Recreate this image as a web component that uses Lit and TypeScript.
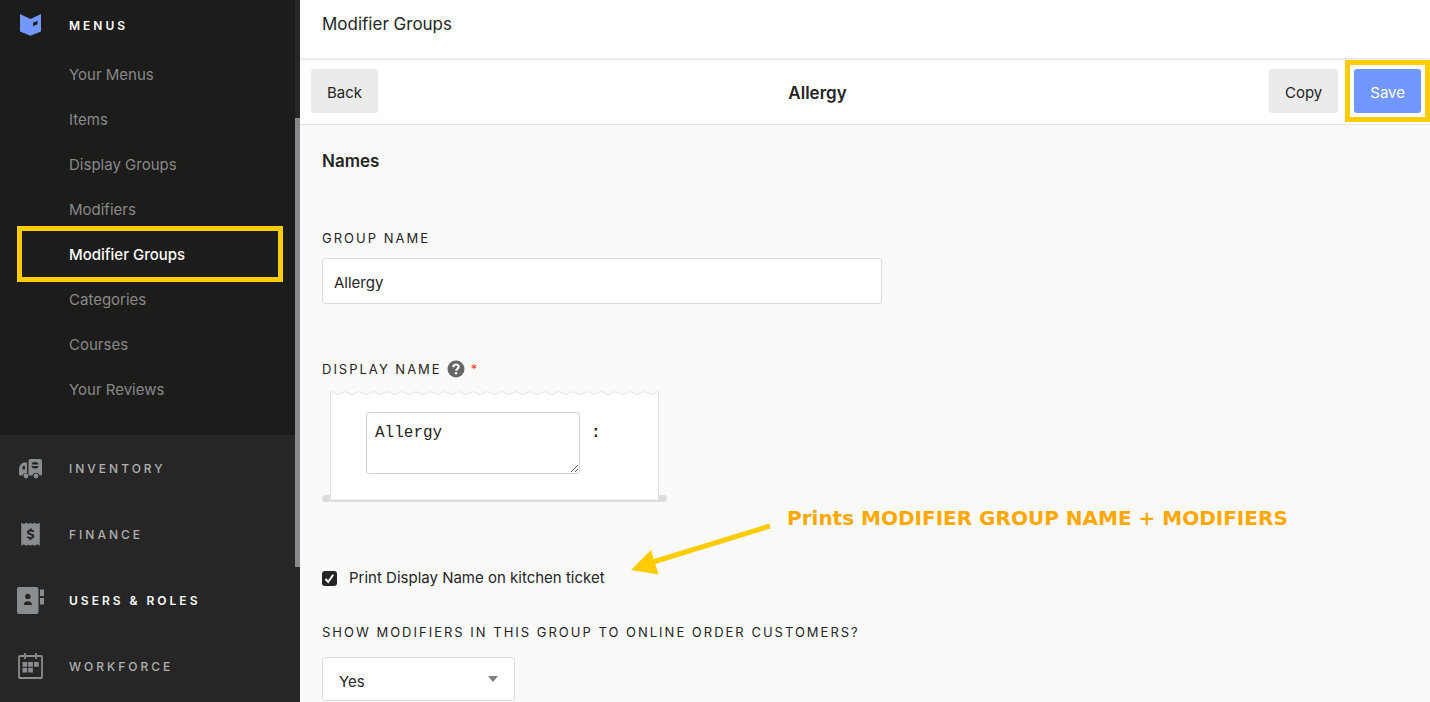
import { LitElement, html, css, svg } from "lit";
import { customElement, property } from "lit/decorators.js";
import { classMap } from "lit/directives/class-map.js";

const glyphs = {
  menus: svg`<path fill="#7297ff" fill-rule="evenodd" d="M20 14l10.500 5L41 14v17.500L30.500 35.700 20 31.500zM33 22.700v3.600l4.500-2v-3.600z"/>`,
  inventory: svg`<g transform="translate(0 2)"><path fill="currentColor" fill-rule="evenodd" d="M30.500 14h9.500a2 2 0 0 1 2 2v13a1.500 1.500 0 0 1-1.500 1.500h-1a3.600 3.600 0 0 0-7 0h-2.500a2 2 0 0 1-1.500-1V16a2 2 0 0 1 2-2zM31.500 19.500h7a3.500 2.500 0 0 0-7 0zM31.500 21a3.500 2.500 0 0 0 7 0z"/><path fill="currentColor" fill-rule="evenodd" d="M24.500 17.500h2.500v11a3.600 3.600 0 0 0-4.500 2h-2a1.500 1.500 0 0 1-1.500-1.500v-5c0-3 2.500-6.500 5.500-6.500zM22.500 21.500v3h2.500v-3.500h-2z"/><circle cx="26" cy="31" r="2.400" fill="currentColor"/><circle cx="36" cy="31" r="2.400" fill="currentColor"/></g>`,
  finance: svg`<g transform="translate(0 1)"><path fill="currentColor" d="M21.200 12.500c2.500 2.400 4 .9 5 0 1.600 1.700 3 1.700 4.300 0 1.300 1.700 2.700 1.700 4.300 0 1 .9 2.500 2.400 5 0v23.500c-2.500-2.600-4-1-5 0-1.600-1.800-3-1.800-4.300 0-1.300-1.800-2.700-1.800-4.300 0-1-1-2.500-2.600-5 0z"/><path fill="none" stroke="#262626" stroke-width="2" d="M33.700 21.700c-.8-1.300-5.700-1.800-5.700.6 0 2.500 5.500 1.200 5.500 3.800 0 2.500-5.200 2.200-6.200.6M30.800 18.500v2.500M30.400 27v3"/></g>`,
  users: svg`<g transform="translate(0 1)"><path fill="currentColor" fill-rule="evenodd" d="M19 11h17.500a2 2 0 0 1 2 2v23a2 2 0 0 1-2 2H19a2 2 0 0 1-2-2V13a2 2 0 0 1 2-2zM23.800 29h8.200c0-2.600-1.600-3.700-4.100-3.700s-4.100 1.100-4.100 3.700zM27.900 17.700a2.700 2.700 0 1 0 0 5.400 2.700 2.700 0 0 0 0-5.400z"/><path fill="currentColor" d="M40 13.500h4v6.500h-4zM40 22h4v6.500h-4z"/></g>`,
  workforce: svg`<g transform="translate(0 1)"><path fill="none" stroke="currentColor" stroke-width="1.800" d="M24 14h-4a1 1 0 0 0-1 1v20a1 1 0 0 0 1 1h21a1 1 0 0 0 1-1V15a1 1 0 0 0-1-1h-4M26 14h9M25 11v6M36 11v6"/><path fill="currentColor" d="M28.200 20h4.700v4.700h-4.700zM34 20h4.700v4.700H34zM22.500 20h4.700v4.700h-4.700zM22.500 25.700h4.700v4.700h-4.700zM28.200 25.700h4.700v4.700h-4.700z"/></g>`,
};

type GlyphName = keyof typeof glyphs;

const menuPages = ["Your Menus", "Items", "Display Groups", "Modifiers", "Modifier Groups", "Categories", "Courses", "Your Reviews"];

const sections: { label: string; glyph: GlyphName; bright?: boolean }[] = [
  { label: "Inventory", glyph: "inventory" },
  { label: "Finance", glyph: "finance" },
  { label: "Users & Roles", glyph: "users", bright: true },
  { label: "Workforce", glyph: "workforce" },
];

// One edge of torn receipt paper, repeated across the top of the ticket.
const tornEdge = "c3 0 4 2.500 7.130 2.500s4.130-2.500 7.130-2.500".repeat(23);

@customElement("side-nav")
class SideNav extends LitElement {
  @property() current = "";

  static styles = css`
    :host { display: flex; width: 300px; flex: none; background: #262626; overflow: hidden; }
    nav { flex: 1; }
    ul { list-style: none; margin: 0; padding: 0; }
    a { text-decoration: none; color: inherit; }
    .open { display: flow-root; background: #1c1c1a; padding-bottom: 23px; }
    .section { display: flex; align-items: center; height: 66px; color: #b0b0b0; font-size: 12px; font-weight: 500; letter-spacing: 3px; text-transform: uppercase; }
    .section svg { width: 69px; height: 50px; flex: none; color: #8a8d8f; }
    .section.head { height: 50px; margin-bottom: 2px; }
    .section.bright { color: #fff; font-weight: 600; }
    .page { position: relative; display: flex; align-items: center; height: 45px; padding-left: 69px; font-size: 15px; color: #888; }
    .page.active { color: #fff; font-weight: 500; }
    .marker { position: absolute; inset: -6px 12px -5px 17px; border: 5px solid #fc0; pointer-events: none; }
    .track { width: 5px; padding-top: 118px; }
    .thumb { height: 449px; background: #88898c; }
  `;

  glyph(name: GlyphName) {
    return html`<svg viewBox="0 0 69 50" aria-hidden="true">${glyphs[name]}</svg>`;
  }

  render() {
    return html`
      <nav aria-label="Main">
        <div class="open">
          <a class="section head bright" href="#menus">${this.glyph("menus")}<span>Menus</span></a>
          <ul>
            ${menuPages.map((page) => {
              const active = page === this.current;
              return html`<li>
                <a class=${classMap({ page: true, active })} href="#page">${page}${active ? html`<span class="marker"></span>` : ""}</a>
              </li>`;
            })}
          </ul>
        </div>
        ${sections.map(
          (s) => html`<a class=${classMap({ section: true, bright: !!s.bright })} href="#section">${this.glyph(s.glyph)}<span>${s.label}</span></a>`
        )}
      </nav>
      <div class="track"><div class="thumb"></div></div>
    `;
  }
}

@customElement("app-root")
class AppRoot extends LitElement {
  static styles = css`
    :host { display: flex; height: 100vh; overflow: hidden; font-family: Inter, "Liberation Sans", sans-serif; font-size: 15px; color: #252525; background: #fafafa; }
    * { box-sizing: border-box; }
    main { flex: 1; min-width: 0; overflow: hidden; }
    h1, h2, h3 { margin: 0; }
    .top { position: relative; height: 58px; padding: 12px 22px; background: #fff; box-shadow: 0 1px 4px rgba(0, 0, 0, 0.16); }
    .top h1 { font-size: 17px; line-height: 24px; font-weight: 400; }
    .bar { display: flex; align-items: center; height: 67px; padding: 0 9px 0 11px; background: #fff; border-bottom: 1px solid #e5e5e5; }
    .bar h2 { flex: 1; padding-top: 3px; text-align: center; font-size: 17px; line-height: 24px; font-weight: 600; }
    .actions { display: flex; gap: 16px; padding-left: 12px; }
    button { height: 44px; padding: 3px 16px 0; border: 0; border-radius: 3px; background: #ebebeb; color: #252525; font: inherit; }
    .save { position: relative; background: #7297ff; color: #fff; }
    .marker { position: absolute; inset: -9px; border: 5px solid #fc0; pointer-events: none; }
    form { padding: 24px 22px; }
    form h3 { font-size: 17px; line-height: 24px; font-weight: 600; margin-bottom: 55px; }
    .label { display: flex; align-items: center; height: 20px; margin-bottom: 10px; font-size: 13px; letter-spacing: 2px; text-transform: uppercase; }
    .field { margin-bottom: 55px; }
    .text { display: block; width: 560px; max-width: 100%; height: 46px; padding: 3px 11px 0; border: 1px solid #dcdcdc; border-radius: 3px; background: #fff; font: inherit; color: inherit; }
    .help { width: 18px; height: 18px; margin: 0 6px 0 5px; }
    .star { color: #f0412f; }
    .ticket { display: grid; width: 345px; margin-top: 12px; margin-bottom: 64px; }
    .ticket > * { grid-area: 1 / 1; }
    .paper { width: 345px; height: 111px; }
    .entry { display: flex; gap: 11px; padding: 21px 44px; font-family: "Courier New", "Liberation Mono", monospace; font-size: 16px; font-weight: 700; line-height: 20px; }
    .entry textarea { width: 214px; height: 62px; padding: 10px 8px; border: 1px solid #d2d2d2; border-radius: 3px; background: #fff; color: inherit; font-family: inherit; font-size: 16px; font-weight: 400; line-height: 20px; }
    .colon { padding-top: 11px; }
    .check { position: relative; display: flex; align-items: center; margin-bottom: 32px; line-height: 24px; }
    .box { display: grid; margin-right: 12px; }
    .box > * { grid-area: 1 / 1; width: 15px; height: 15px; margin: 0; }
    .box input { appearance: none; border-radius: 3px; background: #252525; }
    .box svg { pointer-events: none; }
    .callout { position: absolute; left: 309px; bottom: 14px; display: flex; align-items: flex-start; gap: 16px; color: #ffa800; font-family: "Arial Black", "DejaVu Sans", sans-serif; font-size: 20px; font-weight: 900; line-height: 24px; white-space: nowrap; }
    .callout svg { width: 140px; height: 56px; margin-top: 14px; }
    .last .label { margin-bottom: 15px; }
    .pick { display: grid; width: 193px; align-items: center; }
    .pick > * { grid-area: 1 / 1; }
    .pick select { appearance: none; width: 100%; height: 44px; padding: 4px 16px 0; border: 1px solid #dcdcdc; border-radius: 3px; background: #fff; font: inherit; color: inherit; }
    .pick svg { width: 10px; height: 6px; justify-self: end; margin-right: 17px; pointer-events: none; }
  `;

  render() {
    return html`
      <side-nav current="Modifier Groups"></side-nav>
      <main>
        <header class="top"><h1>Modifier Groups</h1></header>
        <div class="bar">
          <button type="button">Back</button>
          <h2>Allergy</h2>
          <div class="actions">
            <button type="button">Copy</button>
            <button type="button" class="save">Save<span class="marker"></span></button>
          </div>
        </div>
        <form>
          <h3>Names</h3>
          <div class="field">
            <label class="label" for="group">Group Name</label>
            <input class="text" id="group" type="text" .value=${"Allergy"} />
          </div>
          <label class="label" for="display">Display Name
            <svg class="help" viewBox="0 0 18 18" aria-hidden="true">
              <circle cx="9" cy="9" r="8.500" fill="#666" />
              <path d="M6.300 7.200c0-3.600 5.600-3.400 5.400-.3-.1 1.900-2.500 1.800-2.500 3.900" fill="none" stroke="#fff" stroke-width="2" />
              <circle cx="9.100" cy="13.300" r="1.200" fill="#fff" />
            </svg>
            <span class="star">*</span>
          </label>
          <div class="ticket">
            <svg class="paper" viewBox="0 0 345 111" aria-hidden="true">
              <rect x="0" y="104" width="345" height="7" rx="3.500" fill="#dcdcdc" />
              <path d=${`M8.500 109V.8${tornEdge}V109z`} fill="#fff" stroke="#e2e2e2" />
              <path d="M3 110h339" stroke="#dcdcdc" stroke-width="2" />
            </svg>
            <div class="entry">
              <textarea id="display" .value=${"Allergy"}></textarea>
              <span class="colon">:</span>
            </div>
          </div>
          <div class="check">
            <span class="box">
              <input type="checkbox" id="print" checked />
              <svg viewBox="0 0 15 15" aria-hidden="true"><path d="M3.500 8l2.700 3 5-7.300" fill="none" stroke="#fff" stroke-width="2" /></svg>
            </span>
            <label for="print">Print Display Name on kitchen ticket</label>
            <div class="callout">
              <svg viewBox="0 0 140 56" aria-hidden="true">
                <path d="M139 6L22 42" stroke="#fc0" stroke-width="5" />
                <path d="M0 50L20 30l7.500 24.500z" fill="#fc0" />
              </svg>
              <span>Prints MODIFIER GROUP NAME + MODIFIERS</span>
            </div>
          </div>
          <div class="last">
            <label class="label" for="online">Show modifiers in this group to online order customers?</label>
            <div class="pick">
              <select id="online"><option>Yes</option><option>No</option></select>
              <svg viewBox="0 0 10 6" aria-hidden="true"><path d="M0 0h10L5 6z" fill="#808080" /></svg>
            </div>
          </div>
        </form>
      </main>
    `;
  }
}
